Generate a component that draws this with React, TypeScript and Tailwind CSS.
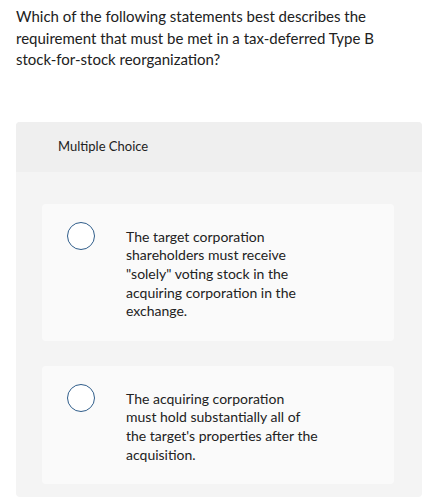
import React from "react";

function Radio() {
  return (
    <div className="w-[28px] h-[28px] rounded-full border-[1.5px] border-[#2f5d8a] bg-white shrink-0" />
  );
}

function Option({ text }: { text: string }) {
  return (
    <div className="bg-[#fafafa] rounded-[4px] flex pl-[25px] pt-[18px] pb-[19.5px]">
      <Radio />
      <p className="ml-[31px] mt-[6px] w-[192px] text-[14px] leading-[18.7px] text-[#222]">
        {text}
      </p>
    </div>
  );
}

export default function App() {
  return (
    <div
      className="w-[438px] h-[504px] bg-white"
      style={{ fontFamily: "Lato, 'Noto Sans', sans-serif" }}
    >
      <p className="pl-[16px] pr-[37px] pt-[6px] text-[15px] leading-[21.5px] text-[#212121]">
        Which of the following statements best describes the requirement that must be met in a tax-deferred Type B stock-for-stock reorganization?
      </p>
      <div className="mx-[16px] mt-[51px] rounded-[4px] overflow-hidden bg-[#f4f4f4]">
        <div className="h-[50px] bg-[#efefef] flex items-center pl-[42px]">
          <span className="text-[13px] text-[#222]">Multiple Choice</span>
        </div>
        <div className="pl-[26px] pr-[28px] pt-[32px] pb-[13px] flex flex-col gap-[25px]">
          <Option
            text={'The target corporation shareholders must receive "solely" voting stock in the acquiring corporation in the exchange.'}
          />
          <Option text="The acquiring corporation must hold substantially all of the target's properties after the acquisition." />
        </div>
      </div>
    </div>
  );
}
